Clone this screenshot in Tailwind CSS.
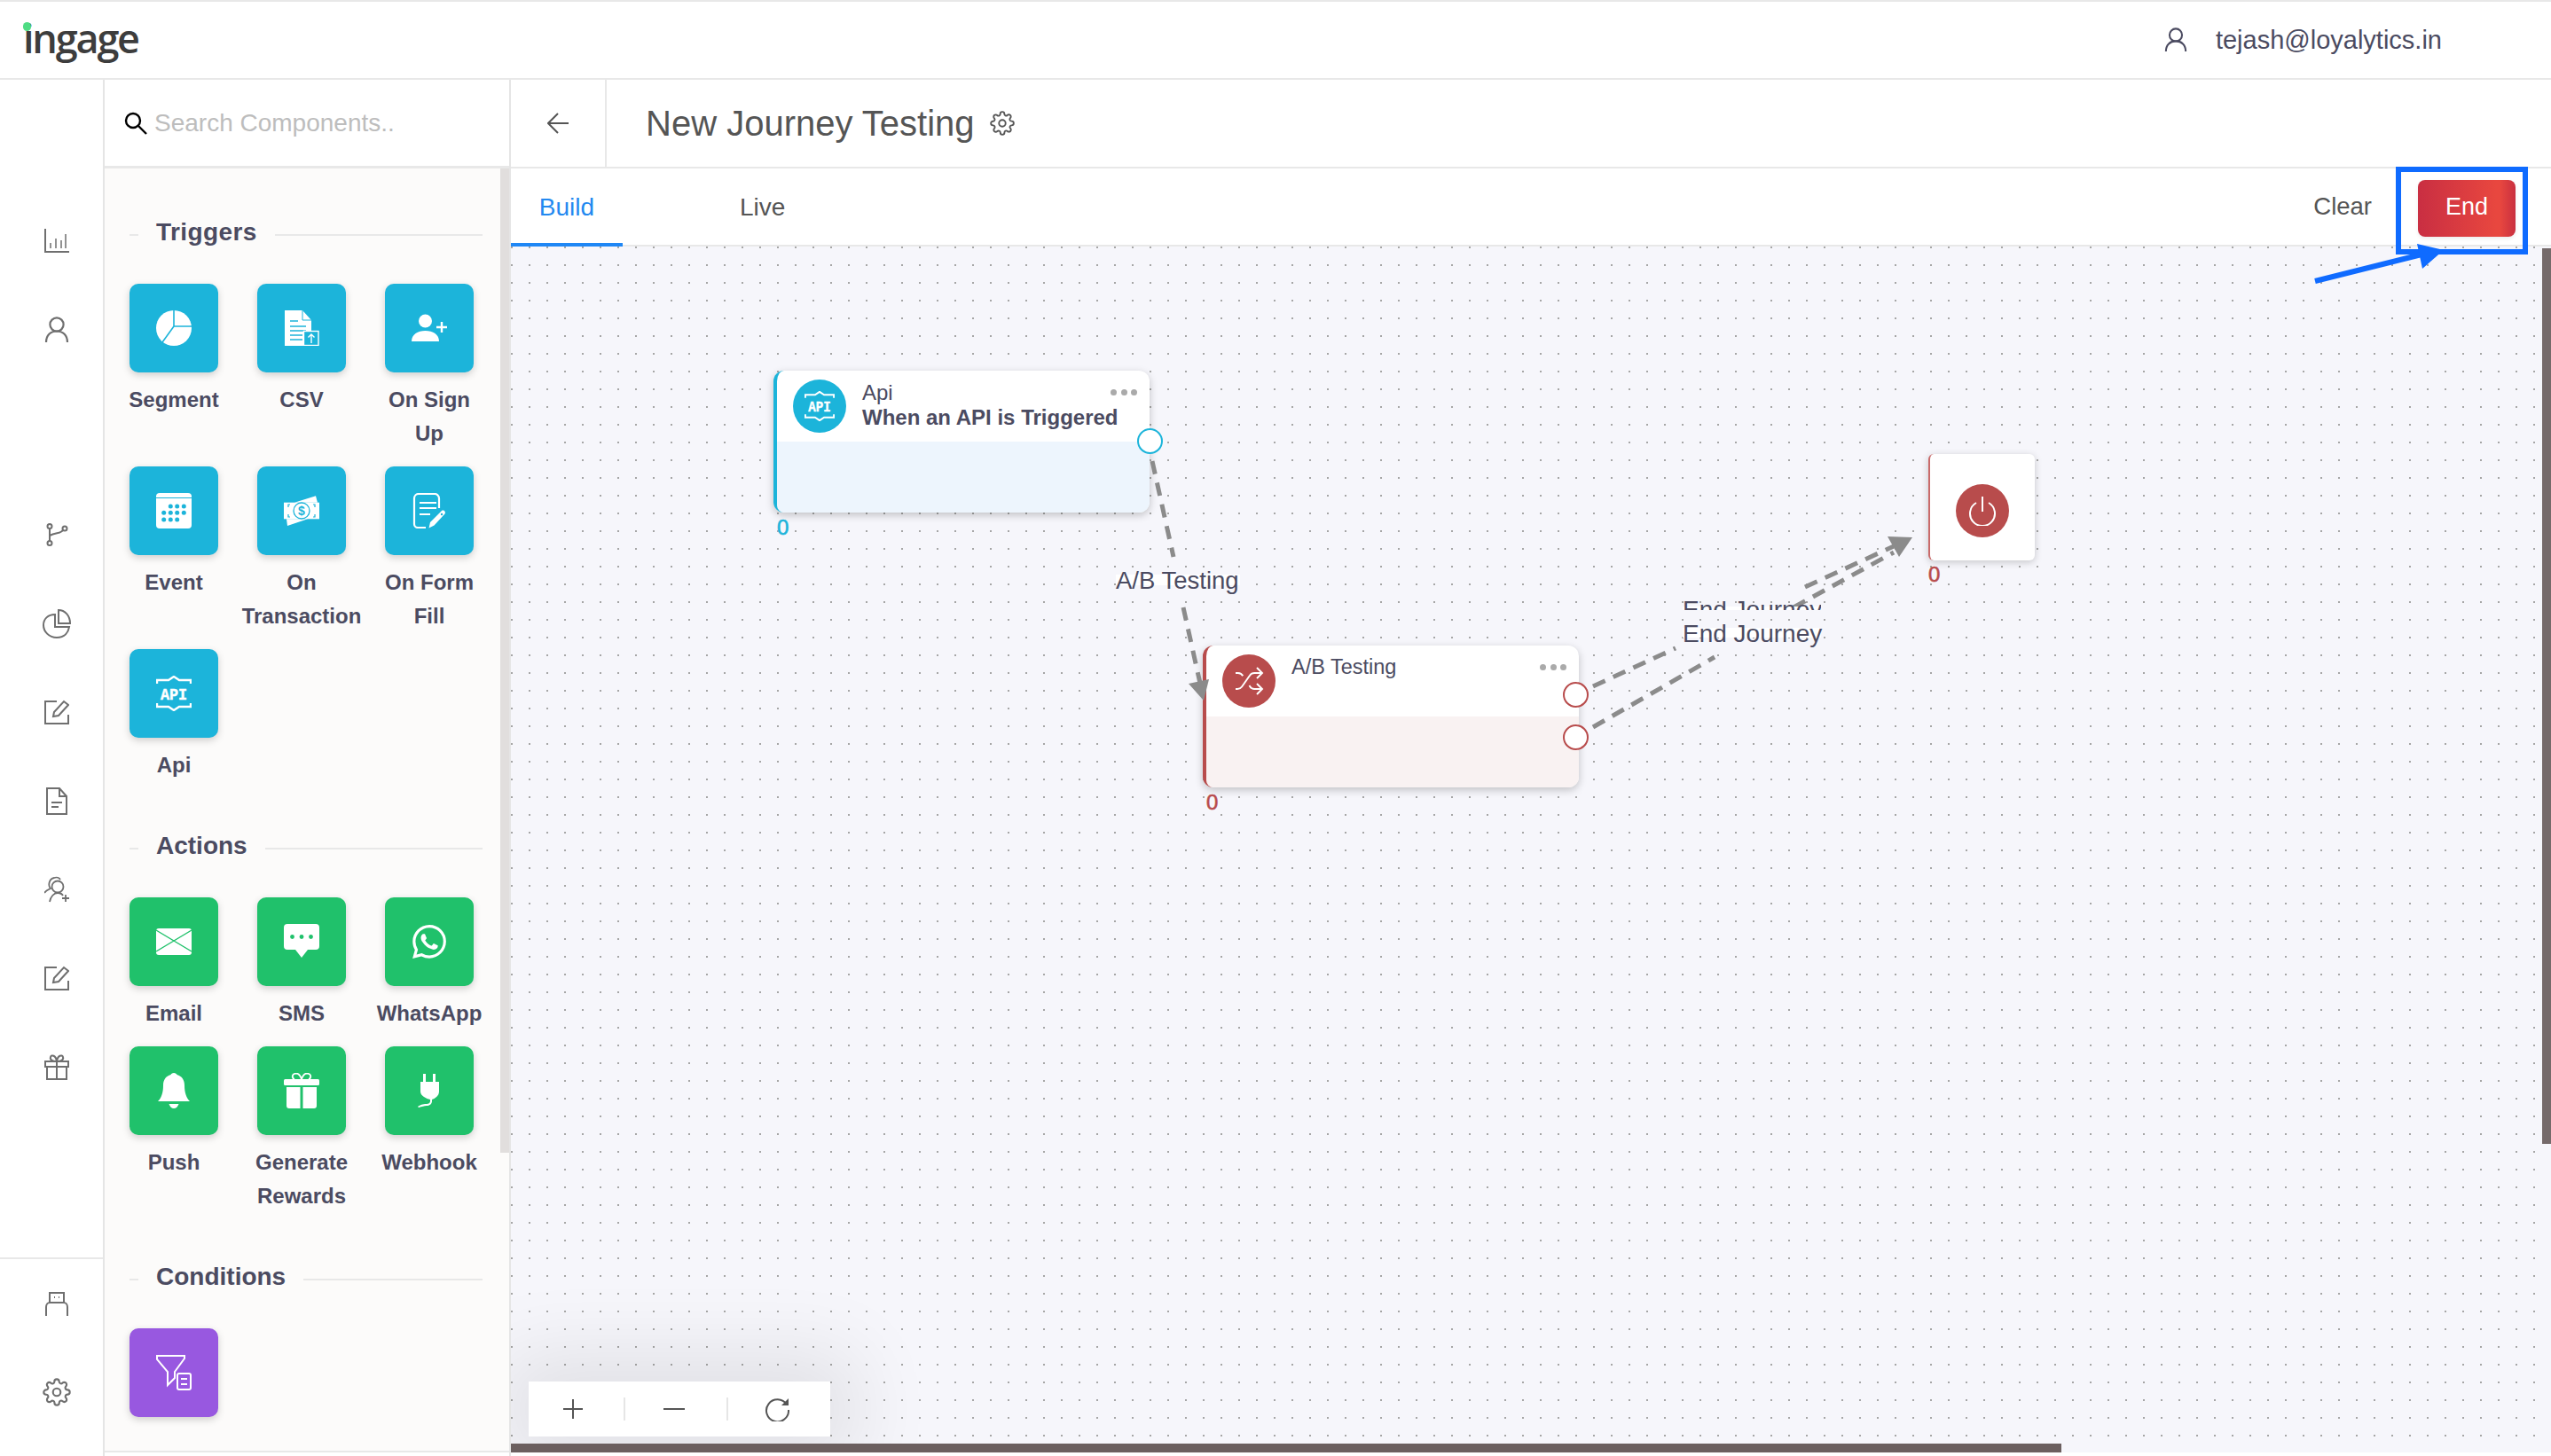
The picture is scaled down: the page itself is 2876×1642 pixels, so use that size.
<!DOCTYPE html>
<html lang="en">
<head>
  <meta charset="UTF-8" />
  <title>New Journey Testing</title>
  <script src="https://cdn.jsdelivr.net/npm/@tailwindcss/browser@4"></script>
</head>
<body class="relative w-[2876px] h-[1642px] overflow-hidden bg-white font-['Liberation_Sans',sans-serif] text-[#4b4b61]">

  <!-- shared icons -->
  <svg class="hidden">
    <symbol id="api" viewBox="0 0 40 40">
      <path d="M1 9V5h13l6-4 6 4h13v4M1 31v4h13l6 4 6-4h13v-4" fill="none" stroke="currentColor" stroke-width="2.400"/>
      <text x="5" y="26.500" textLength="30" lengthAdjust="spacingAndGlyphs" font-family="Liberation Mono" font-weight="700" font-size="19" fill="currentColor" stroke="currentColor" stroke-width="0.500">API</text>
    </symbol>
    <symbol id="edit" viewBox="0 0 28 30">
      <path d="M14 3H1v25h26V18M10 20l1-5L22 3l5 4-11 12z" fill="none" stroke="currentColor" stroke-width="2"/>
    </symbol>
    <symbol id="gear" viewBox="0 0 24 24">
      <circle cx="12" cy="12" r="3.200" fill="none" stroke="currentColor" stroke-width="1.600"/>
      <path fill="none" stroke="currentColor" stroke-width="1.600" d="M19.4 15a1.65 1.65 0 0 0 .33 1.82l.06.06a2 2 0 0 1 0 2.83 2 2 0 0 1-2.83 0l-.06-.06a1.65 1.65 0 0 0-1.82-.33 1.65 1.65 0 0 0-1 1.51V21a2 2 0 0 1-2 2 2 2 0 0 1-2-2v-.09A1.65 1.65 0 0 0 9 19.4a1.65 1.65 0 0 0-1.82.33l-.06.06a2 2 0 0 1-2.83 0 2 2 0 0 1 0-2.83l.06-.06a1.65 1.65 0 0 0 .33-1.82 1.65 1.65 0 0 0-1.51-1H3a2 2 0 0 1-2-2 2 2 0 0 1 2-2h.09A1.65 1.65 0 0 0 4.6 9a1.65 1.65 0 0 0-.33-1.82l-.06-.06a2 2 0 0 1 0-2.83 2 2 0 0 1 2.83 0l.06.06a1.65 1.65 0 0 0 1.82.33H9a1.65 1.65 0 0 0 1-1.51V3a2 2 0 0 1 2-2 2 2 0 0 1 2 2v.09a1.65 1.65 0 0 0 1 1.51 1.65 1.65 0 0 0 1.82-.33l.06-.06a2 2 0 0 1 2.83 0 2 2 0 0 1 0 2.83l-.06.06a1.65 1.65 0 0 0-.33 1.82V9a1.65 1.65 0 0 0 1.51 1H21a2 2 0 0 1 2 2 2 2 0 0 1-2 2h-.09a1.65 1.65 0 0 0-1.51 1z"/>
    </symbol>
    <symbol id="person" viewBox="0 0 28 30">
      <circle cx="14" cy="9" r="7.600" fill="none" stroke="currentColor" stroke-width="2.200"/>
      <path d="M2 29c0-8 5-12.500 12-12.500S26 21 26 29" fill="none" stroke="currentColor" stroke-width="2.200"/>
    </symbol>
  </svg>

  <div class="flex flex-col h-full border-t-2 border-[#e8e8e8]">
    <!-- top bar -->
    <header class="flex items-center justify-between h-[88px] shrink-0 border-b-2 border-[#e8e8e8]">
      <div class="relative ml-[26px] font-['Open_Sans',sans-serif] font-semibold text-[45px] leading-none tracking-[-2.200px] text-[#3d3d3d] -mt-[6px]">
        ingage
        <span class="absolute left-[0px] top-[5px] w-[9px] h-[10px] rounded-full bg-[#4fdc83]"></span>
      </div>
      <div class="flex items-center mr-[123px]">
        <svg class="w-[26px] h-[28px] text-[#4b4b61]"><use href="#person"/></svg>
        <span class="ml-[32px] text-[29px] leading-none">tejash@loyalytics.in</span>
      </div>
    </header>

    <div class="flex flex-1 min-h-0">
      <!-- icon rail -->
      <nav class="w-[118px] shrink-0 border-r-2 border-[#e5e5e5] flex flex-col text-[#6f6f6f]">
        <div class="pt-[132px]">
          <div class="h-[100px] pl-3 flex items-center justify-center">
            <svg class="w-[28px] h-[28px]" viewBox="0 0 28 28" fill="none" stroke="currentColor" stroke-width="2"><path d="M1 0v26h27" /><path stroke-width="1.500" d="M7 22v-6M13 22V11M19 22v-9M24 22V6"/></svg>
          </div>
          <div class="h-[100px] pl-3 flex items-center justify-center">
            <svg class="w-[28px] h-[30px]"><use href="#person"/></svg>
          </div>
        </div>
        <div class="mt-[131px]">
          <div class="h-[100px] pl-3 flex items-center justify-center">
            <svg class="w-[26px] h-[26px]" viewBox="0 0 26 26" fill="none" stroke="currentColor" stroke-width="2"><circle cx="5" cy="3.500" r="2.500"/><circle cx="5" cy="22.500" r="2.500"/><circle cx="22" cy="6" r="2.500"/><path d="M5 6v14M20 7.500c-1 4-8 3-15 6.500"/></svg>
          </div>
          <div class="h-[100px] pl-3 flex items-center justify-center">
            <svg class="w-[32px] h-[33px]" viewBox="0 0 32 33" fill="none" stroke="currentColor" stroke-width="2"><path d="M14 6C6 6 1 11 1 18s6 14 15 14 13-6 14-12H14z"/><path d="M18 1c7 0 13 6 13 15H18z"/></svg>
          </div>
          <div class="h-[100px] pl-3 flex items-center justify-center">
            <svg class="w-[28px] h-[30px]"><use href="#edit"/></svg>
          </div>
          <div class="h-[100px] pl-3 flex items-center justify-center">
            <svg class="w-[24px] h-[31px]" viewBox="0 0 24 31" fill="none" stroke="currentColor" stroke-width="2"><path d="M1 1h14l8 9v20H1zM15 1v9h8M6 17h12M6 22h8"/></svg>
          </div>
          <div class="h-[100px] pl-3 flex items-center justify-center">
            <svg class="w-[28px] h-[30px]" viewBox="0 0 28 30" fill="none" stroke="currentColor" stroke-width="1.800"><path d="M0 19c2-3 5-4 7-5-3-3-2-11 4-12 3-1 6 0 7 2"/><circle cx="15" cy="12" r="6.500"/><path d="M6 29c1-6 5-10 9-10 3 0 5 1 6 3M24 21v8M20 25h8"/></svg>
          </div>
          <div class="h-[100px] pl-3 flex items-center justify-center">
            <svg class="w-[28px] h-[30px]"><use href="#edit"/></svg>
          </div>
          <div class="h-[100px] pl-3 flex items-center justify-center">
            <svg class="w-[28px] h-[29px]" viewBox="0 0 28 29" fill="none" stroke="currentColor" stroke-width="2"><path d="M1 8h26v6H1zM3 14v14h22V14M14 8v20M14 8c-5 0-8-2-7-5s6-2 7 5c1-7 6-8 7-5s-2 5-7 5z"/></svg>
          </div>
        </div>
        <div class="mt-auto border-t-2 border-[#e8e8e8] h-[224px]">
          <div class="h-[100px] pl-3 flex items-center justify-center">
            <svg class="w-[26px] h-[27px]" viewBox="0 0 26 27" fill="none" stroke="currentColor" stroke-width="2"><path d="M5 12V1h16v11M1 27v-10c0-3 2-5 4-5h16c2 0 4 2 4 5v10"/><path d="M10 6h1M15 6h1"/></svg>
          </div>
          <div class="h-[100px] pl-3 flex items-center justify-center">
            <svg class="w-[32px] h-[32px]"><use href="#gear"/></svg>
          </div>
        </div>
      </nav>

      <!-- component panel -->
      <aside class="w-[456px] shrink-0 flex flex-col">
        <div class="flex items-center h-[100px] shrink-0 border-b-[3px] border-[#e8e8e8] pl-[22px]">
          <svg class="w-[26px] h-[26px] text-black" viewBox="0 0 26 26" fill="none" stroke="currentColor" stroke-width="2.400"><circle cx="10" cy="10" r="8"/><path d="M16 16l9 9"/></svg>
          <span class="ml-[8px] text-[28px] leading-none text-[#bdbdbd]">Search Components..</span>
        </div>
        <div class="relative flex-1 min-h-0 mb-[4px] border-b-2 border-[#e8e8e8] bg-[#fcfbfa] overflow-hidden pt-[18px]">
          <div class="absolute right-0 top-0 w-[10px] h-[1110px] bg-[#e1dedd]"></div>

          <div class="flex items-center gap-5 h-[108px] mb-[4px] ml-[28px] mr-[30px]">
            <span class="w-[10px] h-[2px] mt-[6px] bg-[#e8e8e8]"></span>
            <h3 class="text-[28px] font-bold tracking-[0.400px]">Triggers</h3>
            <span class="flex-1 h-[2px] mt-[6px] bg-[#e8e8e8]"></span>
          </div>
          <div class="grid grid-cols-[144px_144px_144px] pl-[6px] text-center text-[24px] leading-[38px] font-bold">
            <div class="pb-[18px]">
              <div class="w-[100px] h-[100px] mx-auto mb-3 rounded-[10px] bg-[#1cb4da] shadow-[0_3px_8px_rgba(0,0,0,0.18)] flex items-center justify-center">
                <svg class="w-[40px] h-[40px]" viewBox="0 0 40 40"><ellipse cx="20" cy="20" rx="20" ry="20" fill="#fff"/><path d="M20 0v18H40M20 18L7 36" fill="none" stroke="#1cb4da" stroke-width="1.600"/></svg>
              </div>
              Segment
            </div>
            <div class="pb-[18px]">
              <div class="w-[100px] h-[100px] mx-auto mb-3 rounded-[10px] bg-[#1cb4da] shadow-[0_3px_8px_rgba(0,0,0,0.18)] flex items-center justify-center">
                <svg class="w-[40px] h-[40px]" viewBox="0 0 40 40"><path d="M1 0h20l10 11v29H1z" fill="#fff"/><path d="M21 0v11h10" fill="none" stroke="#1cb4da" stroke-width="1"/><path d="M7 12h9M7 18h18M7 23h18M7 28h14M7 33h14" stroke="#1cb4da" stroke-width="1.400"/><rect x="22.500" y="23.500" width="16.500" height="16" fill="#1cb4da" stroke="#fff" stroke-width="1.400"/><path d="M31 37V27M27.500 30.500L31 27l3.500 3.500" fill="none" stroke="#fff" stroke-width="1.400"/></svg>
              </div>
              CSV
            </div>
            <div class="pb-[18px]">
              <div class="w-[100px] h-[100px] mx-auto mb-3 rounded-[10px] bg-[#1cb4da] shadow-[0_3px_8px_rgba(0,0,0,0.18)] flex items-center justify-center">
                <svg class="w-[40px] h-[40px]" viewBox="0 0 40 40"><circle cx="15.500" cy="12" r="7.500" fill="#fff"/><path d="M0 35c0-8 7-12 15.500-12S31 27 31 35z" fill="#fff"/><path d="M34 13v12M28 19h12" stroke="#fff" stroke-width="2.400"/></svg>
              </div>
              On Sign<br />Up
            </div>

            <div class="pb-[18px]">
              <div class="w-[100px] h-[100px] mx-auto mb-3 rounded-[10px] bg-[#1cb4da] shadow-[0_3px_8px_rgba(0,0,0,0.18)] flex items-center justify-center">
                <svg class="w-[40px] h-[40px]" viewBox="0 0 40 40"><rect width="40" height="40" rx="4" fill="#fff"/><path d="M0 5.500h40" stroke="#1cb4da" stroke-width="1"/><g fill="#1cb4da"><circle cx="16.300" cy="15" r="2.500"/><circle cx="23.700" cy="15" r="2.500"/><circle cx="31.300" cy="15" r="2.500"/><circle cx="8.700" cy="22.300" r="2.500"/><circle cx="16.300" cy="22.300" r="2.500"/><circle cx="23.700" cy="22.300" r="2.500"/><circle cx="31.300" cy="22.300" r="2.500"/><circle cx="8.700" cy="30" r="2.500"/><circle cx="16.300" cy="30" r="2.500"/><circle cx="23.700" cy="30" r="2.500"/></g></svg>
              </div>
              Event
            </div>
            <div class="pb-[18px]">
              <div class="w-[100px] h-[100px] mx-auto mb-3 rounded-[10px] bg-[#1cb4da] shadow-[0_3px_8px_rgba(0,0,0,0.18)] flex items-center justify-center">
                <svg class="w-[40px] h-[40px]" viewBox="0 0 40 40"><path d="M12 10.700L36 3.300l2 7.400zM3 29.300h24L4 37z" fill="#fff"/><rect y="10.700" width="40" height="18.600" fill="#fff"/><circle cx="20" cy="20" r="9" fill="none" stroke="#1cb4da" stroke-width="1.300"/><text x="20" y="25" text-anchor="middle" font-size="14" fill="#1cb4da" font-family="Liberation Sans">$</text><path d="M5 16v-3h2M35 16v-3h-2M5 24v3h2M35 24v3h-2" fill="none" stroke="#1cb4da" stroke-width="1.200"/></svg>
              </div>
              On<br />Transaction
            </div>
            <div class="pb-[18px]">
              <div class="w-[100px] h-[100px] mx-auto mb-3 rounded-[10px] bg-[#1cb4da] shadow-[0_3px_8px_rgba(0,0,0,0.18)] flex items-center justify-center">
                <svg class="w-[40px] h-[40px]" viewBox="0 0 40 40"><path d="M31 17V6a5 5 0 0 0-5-5H8a5 5 0 0 0-5 5v29a4 4 0 0 0 4 4h9" fill="none" stroke="#fff" stroke-width="2.200"/><path d="M9 11h19M9 17h19M9 24h12" stroke="#fff" stroke-width="2.200"/><path d="M19.500 39.500l1.500-6.500 13-13c2-1.500 5 1 3.500 3.500l-12 13z" fill="#fff"/><circle cx="34" cy="24" r="1.200" fill="#1cb4da"/></svg>
              </div>
              On Form<br />Fill
            </div>

            <div class="pb-[18px]">
              <div class="w-[100px] h-[100px] mx-auto mb-3 rounded-[10px] bg-[#1cb4da] shadow-[0_3px_8px_rgba(0,0,0,0.18)] flex items-center justify-center text-white">
                <svg class="w-[40px] h-[40px]"><use href="#api"/></svg>
              </div>
              Api
            </div>
          </div>

          <div class="flex items-center gap-5 h-[108px] mb-[4px] ml-[28px] mr-[30px]">
            <span class="w-[10px] h-[2px] mt-[6px] bg-[#e8e8e8]"></span>
            <h3 class="text-[28px] font-bold">Actions</h3>
            <span class="flex-1 h-[2px] mt-[6px] bg-[#e8e8e8]"></span>
          </div>
          <div class="grid grid-cols-[144px_144px_144px] pl-[6px] text-center text-[24px] leading-[38px] font-bold">
            <div class="pb-[18px]">
              <div class="w-[100px] h-[100px] mx-auto mb-3 rounded-[10px] bg-[#20c16b] shadow-[0_3px_8px_rgba(0,0,0,0.18)] flex items-center justify-center">
                <svg class="w-[40px] h-[30px]" viewBox="0 0 40 30"><rect width="40" height="30" rx="3" fill="#fff"/><path d="M0 2l40 24M40 2L0 26" fill="none" stroke="#20c16b" stroke-width="1.400"/></svg>
              </div>
              Email
            </div>
            <div class="pb-[18px]">
              <div class="w-[100px] h-[100px] mx-auto mb-3 rounded-[10px] bg-[#20c16b] shadow-[0_3px_8px_rgba(0,0,0,0.18)] flex items-center justify-center">
                <svg class="w-[40px] h-[40px]" viewBox="0 0 40 40"><path d="M4 0h32a4 4 0 0 1 4 4v21a4 4 0 0 1-4 4H27l-7 9-7-9H4a4 4 0 0 1-4-4V4a4 4 0 0 1 4-4z" fill="#fff"/><g fill="#20c16b"><circle cx="9.500" cy="14.500" r="2.400"/><circle cx="20" cy="14.500" r="2.400"/><circle cx="30.500" cy="14.500" r="2.400"/></g></svg>
              </div>
              SMS
            </div>
            <div class="pb-[18px]">
              <div class="w-[100px] h-[100px] mx-auto mb-3 rounded-[10px] bg-[#20c16b] shadow-[0_3px_8px_rgba(0,0,0,0.18)] flex items-center justify-center">
                <svg class="w-[38px] h-[38px]" viewBox="0 0 24 24" fill="#fff"><path d="M17.472 14.382c-.297-.149-1.758-.867-2.030-.967-.273-.099-.471-.148-.670.150-.197.297-.767.966-.940 1.164-.173.199-.347.223-.644.075-.297-.150-1.255-.463-2.390-1.475-.883-.788-1.480-1.761-1.653-2.059-.173-.297-.018-.458.130-.606.134-.133.298-.347.446-.520.149-.174.198-.298.298-.497.099-.198.050-.371-.025-.520-.075-.149-.669-1.612-.916-2.207-.242-.579-.487-.500-.669-.510-.173-.008-.371-.010-.570-.010-.198 0-.520.074-.792.372-.272.297-1.040 1.016-1.040 2.479 0 1.462 1.065 2.875 1.213 3.074.149.198 2.096 3.200 5.077 4.487.709.306 1.262.489 1.694.625.712.227 1.360.195 1.871.118.571-.085 1.758-.719 2.006-1.413.248-.694.248-1.289.173-1.413-.074-.124-.272-.198-.570-.347m-5.421 7.403h-.004a9.870 9.870 0 01-5.031-1.378l-.361-.214-3.741.982.998-3.648-.235-.374a9.860 9.860 0 01-1.510-5.260c.001-5.450 4.436-9.884 9.888-9.884 2.640 0 5.122 1.030 6.988 2.898a9.825 9.825 0 012.893 6.994c-.003 5.450-4.437 9.884-9.885 9.884m8.413-18.297A11.815 11.815 0 0012.050 0C5.495 0 .160 5.335.157 11.892c0 2.096.547 4.142 1.588 5.945L.057 24l6.305-1.654a11.882 11.882 0 005.683 1.448h.005c6.554 0 11.890-5.335 11.893-11.893a11.821 11.821 0 00-3.480-8.413Z"/></svg>
              </div>
              WhatsApp
            </div>

            <div class="pb-[18px]">
              <div class="w-[100px] h-[100px] mx-auto mb-3 rounded-[10px] bg-[#20c16b] shadow-[0_3px_8px_rgba(0,0,0,0.18)] flex items-center justify-center">
                <svg class="w-[36px] h-[40px]" viewBox="0 0 36 40" fill="#fff"><path d="M18 0c2 0 3 1 3.500 2C27 3.500 30 8 30 14c0 8 2 14 6 18H0c4-4 6-10 6-18C6 8 9 3.500 14.500 2 15 1 16 0 18 0z"/><path d="M12.500 35h11c-1 3-3 5-5.500 5s-4.500-2-5.500-5z"/></svg>
              </div>
              Push
            </div>
            <div class="pb-[18px]">
              <div class="w-[100px] h-[100px] mx-auto mb-3 rounded-[10px] bg-[#20c16b] shadow-[0_3px_8px_rgba(0,0,0,0.18)] flex items-center justify-center">
                <svg class="w-[40px] h-[40px]" viewBox="0 0 40 40"><path d="M20 7c-2-6-5-7-8-6-3 1-3 5 0 6M20 7c2-6 5-7 8-6 3 1 3 5 0 6" fill="none" stroke="#fff" stroke-width="1.800"/><rect y="7" width="40" height="7" rx="1.500" fill="#fff"/><path d="M3 16h15.500v24H6a3 3 0 0 1-3-3zM21.500 16H37v21a3 3 0 0 1-3 3H21.500z" fill="#fff"/></svg>
              </div>
              Generate<br />Rewards
            </div>
            <div class="pb-[18px]">
              <div class="w-[100px] h-[100px] mx-auto mb-3 rounded-[10px] bg-[#20c16b] shadow-[0_3px_8px_rgba(0,0,0,0.18)] flex items-center justify-center">
                <svg class="w-[26px] h-[38px]" viewBox="0 0 26 38" fill="#fff"><path d="M6 0h3v9H6zM17 0h3v9h-3zM3 9h21v11c0 5-5 8-8 9v2c0 3-3 5-6 5-3 0-5 1-9 2l-1-1c3-2 5-3 10-3 2 0 4-1 4-3v-2c-4-1-11-4-11-9z"/></svg>
              </div>
              Webhook
            </div>
          </div>

          <div class="flex items-center gap-5 h-[108px] mb-[4px] ml-[28px] mr-[30px]">
            <span class="w-[10px] h-[2px] mt-[6px] bg-[#e8e8e8]"></span>
            <h3 class="text-[28px] font-bold">Conditions</h3>
            <span class="flex-1 h-[2px] mt-[6px] bg-[#e8e8e8]"></span>
          </div>
          <div class="pl-[28px]">
            <div class="w-[100px] h-[100px] rounded-[10px] bg-[#9858e0] shadow-[0_3px_8px_rgba(0,0,0,0.18)] flex items-center justify-center">
              <svg class="w-[40px] h-[40px]" viewBox="0 0 40 40" fill="none" stroke="#fff" stroke-width="2"><path d="M1 1h31v3L21 19v7l-8 8V19L1 5z"/><rect x="24" y="21" width="15" height="18" rx="2"/><path d="M28 27h7M28 33h7"/></svg>
            </div>
          </div>
        </div>
      </aside>

      <!-- journey editor -->
      <main class="flex-1 min-w-0 flex flex-col border-l-2 border-[#e5e5e5]">
        <div class="flex items-center h-[100px] shrink-0 border-b-2 border-[#e8e8e8]">
          <div class="w-[108px] h-full flex items-center justify-center border-r-2 border-[#e8e8e8]">
            <svg class="w-[24px] h-[24px] text-[#555]" viewBox="0 0 24 24" fill="none" stroke="currentColor" stroke-width="2"><path d="M24 12H1M12 1L1 12l11 11"/></svg>
          </div>
          <h1 class="ml-[44px] text-[40px] leading-none text-[#555]">New Journey Testing</h1>
          <svg class="ml-[17px] w-[28px] h-[28px] text-[#555]"><use href="#gear"/></svg>
        </div>

        <div class="flex items-center justify-between h-[88px] shrink-0 border-b-2 border-[#e8e8e8]">
          <div class="flex h-full text-[28px] leading-none">
            <div class="flex items-center justify-center w-[126px] pt-[4px] -mb-[2px] border-b-4 border-[#1f87f5] text-[#2389f0]">Build</div>
            <div class="flex items-center ml-[132px] pt-[2px] text-[#555]">Live</div>
          </div>
          <div class="flex items-center mr-[40px] pt-[3px]">
            <button class="mb-[4px] text-[27.500px] leading-none text-[#555]">Clear</button>
            <button class="ml-[52px] pb-[3px] w-[110px] h-[64px] rounded-[8px] text-[27px] text-white bg-[linear-gradient(90deg,#c92e42_0%,#e8473f_80%,#e8473f_84%,#c93040_100%)] shadow-[0_2px_4px_rgba(0,0,0,0.08)]">End</button>
          </div>
        </div>

        <!-- canvas: nodes sit at their diagram positions -->
        <div class="relative flex-1 min-h-0 overflow-hidden bg-[#f6f6fb] bg-[radial-gradient(circle_at_1px_1px,#a6a6a6_1px,transparent_1px)] bg-[length:20px_20px]">

          <div class="absolute left-[296px] top-[140px] w-[424px] h-[160px] rounded-[12px] border-l-4 border-[#1cb4da] bg-white shadow-[0_3px_10px_rgba(0,0,0,0.22)] flex flex-col">
            <div class="relative h-[80px] shrink-0 flex items-start pl-[18px] pt-[10px]">
              <div class="w-[60px] h-[60px] rounded-full bg-[#1cb4da] text-white flex items-center justify-center">
                <svg class="w-[34px] h-[34px]"><use href="#api"/></svg>
              </div>
              <div class="ml-[18px] pt-[1px] text-[24px] leading-[28px]">
                <div>Api</div>
                <div class="font-bold whitespace-nowrap">When an API is Triggered</div>
              </div>
              <div class="absolute right-[14px] top-[21px] flex gap-[4.500px]">
                <span class="w-[7px] h-[7px] rounded-full bg-[#aaa]"></span><span class="w-[7px] h-[7px] rounded-full bg-[#aaa]"></span><span class="w-[7px] h-[7px] rounded-full bg-[#aaa]"></span>
              </div>
            </div>
            <div class="flex-1 rounded-br-[12px] rounded-bl-[8px] bg-[#edf5fd]"></div>
            <span class="absolute right-[-15px] top-[65px] w-[29px] h-[29px] rounded-full border-2 border-[#1cb4da] bg-white"></span>
            <span class="absolute left-0 top-[163px] text-[24px] leading-[28px] text-[#1cb4da] [-webkit-text-stroke:0.6px_#1cb4da]">0</span>
          </div>

          <div class="absolute left-[780px] top-[450px] w-[424px] h-[160px] rounded-[12px] border-l-4 border-[#b84c4c] bg-white shadow-[0_3px_10px_rgba(0,0,0,0.22)] flex flex-col">
            <div class="relative h-[80px] shrink-0 flex items-start pl-[18px] pt-[10px]">
              <div class="w-[60px] h-[60px] rounded-full bg-[#b84c4c] flex items-center justify-center">
                <svg class="w-[36px] h-[36px]" viewBox="0 0 24 24" fill="none" stroke="#fff" stroke-width="1.300"><path d="M2 18h1.400c1.300 0 2.500-.6 3.300-1.700l6.100-8.600c.7-1.100 2-1.700 3.300-1.700H22"/><path d="m18 2 4 4-4 4"/><path d="M2 6h1.900c1.500 0 2.900.9 3.600 2.200"/><path d="M22 18h-5.900c-1.300 0-2.600-.7-3.300-1.800l-.5-.8"/><path d="m18 14 4 4-4 4"/></svg>
              </div>
              <div class="ml-[18px] text-[23.500px] leading-[28px]">A/B Testing</div>
              <div class="absolute right-[14px] top-[21px] flex gap-[4.500px]">
                <span class="w-[7px] h-[7px] rounded-full bg-[#aaa]"></span><span class="w-[7px] h-[7px] rounded-full bg-[#aaa]"></span><span class="w-[7px] h-[7px] rounded-full bg-[#aaa]"></span>
              </div>
            </div>
            <div class="flex-1 rounded-br-[12px] rounded-bl-[8px] bg-[#f9f2f2]"></div>
            <span class="absolute right-[-11px] top-[41px] w-[29px] h-[29px] rounded-full border-2 border-[#b84c4c] bg-white"></span>
            <span class="absolute right-[-11px] top-[89px] w-[29px] h-[29px] rounded-full border-2 border-[#b84c4c] bg-white"></span>
            <span class="absolute left-0 top-[163px] text-[24px] leading-[28px] text-[#b84c4c] [-webkit-text-stroke:0.6px_#b84c4c]">0</span>
          </div>

          <div class="absolute left-[1598px] top-[234px] w-[120px] h-[120px] rounded-[6px] border-l-2 border-[#c96a6a] bg-white shadow-[0_2px_8px_rgba(0,0,0,0.2)] flex items-center justify-center">
            <div class="w-[60px] h-[60px] mt-2 rounded-full bg-[#b84c4c] flex items-center justify-center">
              <svg class="w-[32px] h-[34px]" viewBox="0 0 32 34" fill="none" stroke="#fff" stroke-width="2"><path d="M16 1v17M9 8a14 14 0 1 0 14 0"/></svg>
            </div>
            <span class="absolute left-[-2px] top-[122px] text-[24px] leading-[28px] text-[#b84c4c] [-webkit-text-stroke:0.6px_#b84c4c]">0</span>
          </div>

          <!-- edges, drawn in page coordinates -->
          <svg class="absolute left-0 top-0 w-[2300px] h-[1364px]" viewBox="576 278 2300 1364" fill="none" stroke="#8b8b8b" stroke-width="5" stroke-dasharray="15 10">
            <path d="M1299 520L1323 628"/>
            <path d="M1334 685L1354 775"/>
            <path d="M1796 774L1889 731"/>
            <path d="M2035 662L2135 616"/>
            <path d="M1796 820L1933 741"/>
            <path d="M2022 685L2135 623"/>
            <path d="M1340 771L1363 766L1357 790z" fill="#8b8b8b" stroke="none"/>
            <path d="M2156 606L2128 605L2141 628z" fill="#8b8b8b" stroke="none"/>
          </svg>

          <div class="absolute left-[682px] top-[370px] h-[12px] w-[140px] bg-white"></div>
          <div class="absolute left-[682px] top-[359px] text-[27.500px] leading-[36px] whitespace-nowrap">A/B Testing</div>

          <div class="absolute left-[1321px] top-[400px] w-[156px] h-[10px] overflow-hidden bg-[linear-gradient(transparent_6px,white_6px)]">
            <div class="-mt-[4px] text-[28px] leading-[28px] whitespace-nowrap">End Journey</div>
          </div>
          <div class="absolute left-[1321px] top-[430px] h-[11px] w-[156px] bg-white"></div>
          <div class="absolute left-[1321px] top-[419px] text-[28px] leading-[36px] whitespace-nowrap">End Journey</div>

          <!-- zoom controls -->
          <div class="absolute left-[20px] top-[1280px] flex items-center w-[340px] h-[62px] bg-white shadow-[0_0_90px_30px_rgba(0,0,0,0.09)] text-[#555]">
            <div class="w-[107px] pr-[7px] flex justify-center">
              <svg class="w-[24px] h-[24px]" viewBox="0 0 24 24" stroke="currentColor" stroke-width="2"><path d="M12 1v22M1 12h22"/></svg>
            </div>
            <span class="w-[2px] h-[26px] bg-[#e6e6e6]"></span>
            <div class="w-[114px] pr-[4px] flex justify-center">
              <svg class="w-[24px] h-[24px]" viewBox="0 0 24 24" stroke="currentColor" stroke-width="2"><path d="M0 12h24"/></svg>
            </div>
            <span class="w-[2px] h-[26px] bg-[#e6e6e6]"></span>
            <div class="w-[115px] pr-[5px] flex justify-center">
              <svg class="w-[28px] h-[28px]" viewBox="0 0 28 28" fill="none" stroke="currentColor" stroke-width="2"><path d="M25 9a12.500 12.500 0 1 0 2 6"/><path d="M27 2v8h-8z" fill="currentColor" stroke="none"/></svg>
            </div>
          </div>

          <!-- scrollbars -->
          <div class="absolute right-0 top-[2px] w-[10px] h-[1010px] bg-[#756a6a]"></div>
          <div class="absolute left-0 bottom-0 w-[1748px] h-[10px] bg-[#6b5f5f]"></div>
        </div>
        <div class="h-1 shrink-0 bg-white"></div>
      </main>
    </div>
  </div>

  <!-- blue annotation drawn over the screenshot -->
  <svg class="absolute left-0 top-0 w-[2876px] h-[1642px] pointer-events-none" viewBox="0 0 2876 1642" fill="none">
    <rect x="2704" y="191" width="143" height="93" stroke="#0f6bff" stroke-width="6"/>
    <path d="M2610 317L2730 287" stroke="#0f6bff" stroke-width="6"/>
    <path d="M2755 282L2725 275L2731 303z" fill="#0f6bff"/>
  </svg>
</body>
</html>
